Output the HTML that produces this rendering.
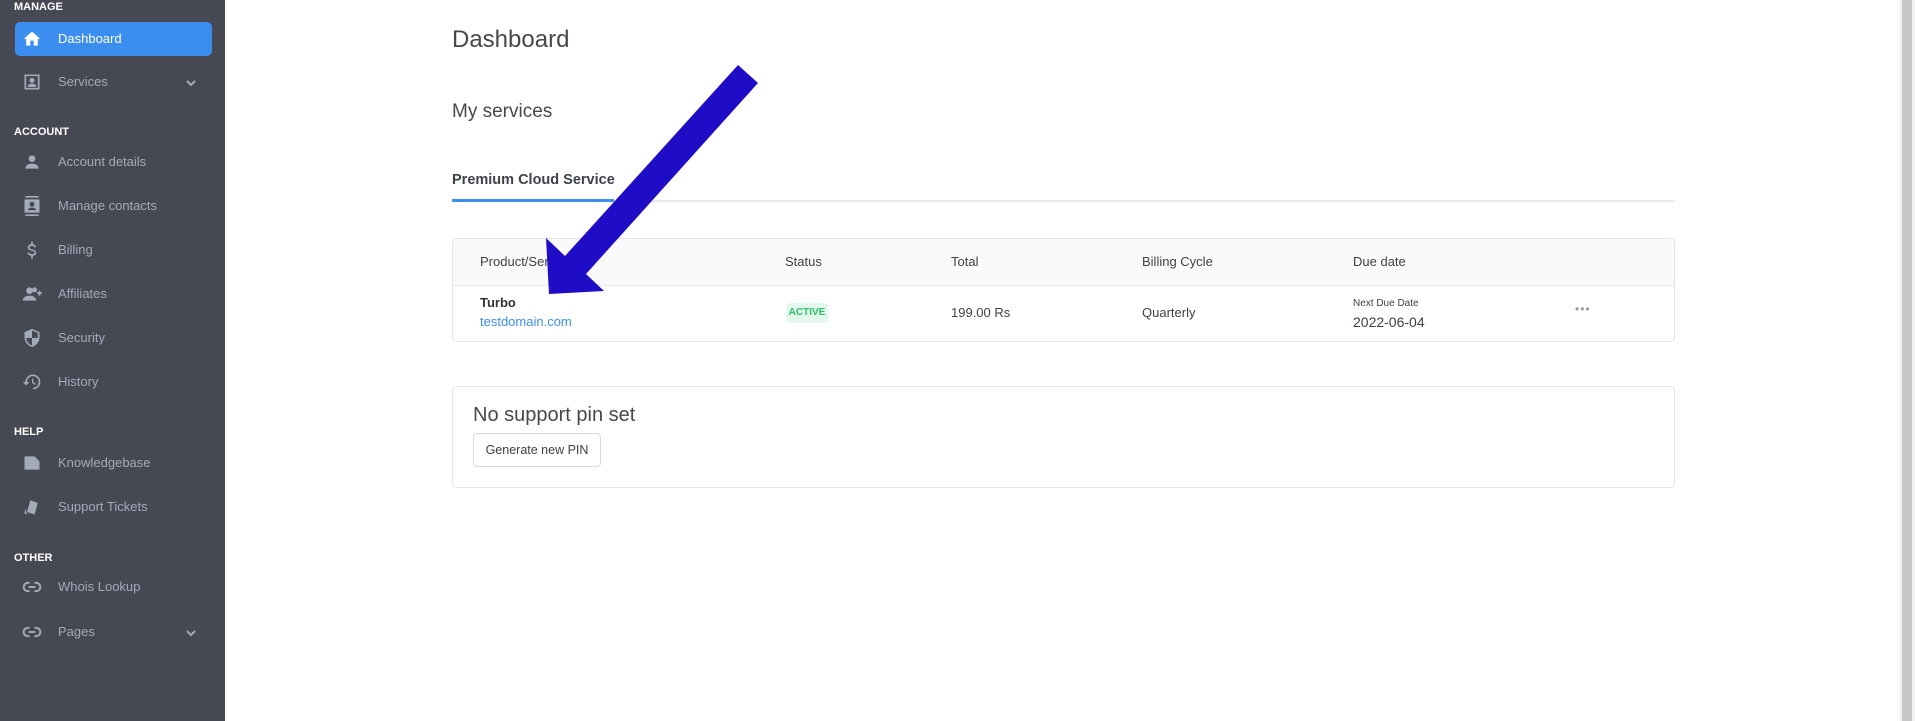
<!DOCTYPE html>
<html><head><meta charset="utf-8">
<style>
*{margin:0;padding:0;box-sizing:border-box}
body{width:1915px;height:721px;overflow:hidden;background:#fff;font-family:"Liberation Sans",sans-serif;position:relative}
.sb{position:absolute;left:0;top:0;width:225px;height:721px;background:#464953}
.lbl{position:absolute;left:14px;color:#fff;font-size:11px;font-weight:bold}
.it{position:absolute;left:15px;width:197px;height:34px;color:#a3aab8;font-size:13px}
.it span{position:absolute;left:43px;top:9px}
.it svg{position:absolute;left:7px;top:7px;width:20px;height:20px;fill:#a3aab8}
.it .chev{left:170px;top:12px;width:12px;height:12px;fill:none;stroke:#a3aab8;stroke-width:2}
.act{background:#3b8ef0;border-radius:5px;color:#fff}
.act svg{fill:#fff}
.t{position:absolute;color:#333}
.sc{position:absolute;left:1900px;top:0;width:15px;height:721px;background:#f1f1f1}
.sc div{position:absolute;left:2px;top:0;width:10px;height:721px;background:#c8c8c8}
</style></head><body>
<div class="sb">
<div class="lbl" style="top:1px">MANAGE</div>
<div class="it act" style="top:22px"><svg viewBox="0 0 24 24"><path d="M10 20v-6h4v6h5v-8h3L12 3 2 12h3v8z"/></svg><span>Dashboard</span></div>
<div class="it" style="top:65px"><svg viewBox="0 0 24 24"><path d="M3 3h18v18H3zM5 5v14h14V5zm7 2a3 3 0 110 6 3 3 0 010-6zm-5 10c0-2 3-3 5-3s5 1 5 3v1H7z"/></svg><span>Services</span><svg class="chev" viewBox="0 0 12 12"><path d="M2 4l4 4 4-4"/></svg></div>
<div class="lbl" style="top:126px">ACCOUNT</div>
<div class="it" style="top:145px"><svg viewBox="0 0 24 24"><circle cx="12" cy="8" r="4"/><path d="M4 20c0-4 4-6 8-6s8 2 8 6z"/></svg><span>Account details</span></div>
<div class="it" style="top:189px"><svg viewBox="0 0 24 24"><path d="M4 0h16v2H4zM4 22h16v2H4zM3 4h18v16H3zm9 3a3 3 0 100 6 3 3 0 000-6zm-5 10h10c0-2-3-3-5-3s-5 1-5 3z"/></svg><span>Manage contacts</span></div>
<div class="it" style="top:233px"><svg viewBox="0 0 24 24"><path d="M11 2h2v3c2 .3 3.5 1.5 4 3.5l-2 .5c-.3-1.3-1.5-2-3-2s-3 .7-3 2c0 1.2 1 1.7 3 2.2 3 .7 5 1.7 5 4.3 0 2-1.6 3.3-4 3.6V22h-2v-3c-2.5-.3-4-1.6-4.4-3.6l2-.5c.3 1.4 1.6 2.2 3.4 2.2 1.8 0 3-.8 3-2 0-1.3-1.2-1.8-3.3-2.3C8.6 12.2 7 11.2 7 8.7 7 6.8 8.6 5.4 11 5z"/></svg><span>Billing</span></div>
<div class="it" style="top:277px"><svg viewBox="0 0 24 24"><circle cx="9" cy="8" r="4"/><path d="M1 20c0-4 4-6 8-6s8 2 8 6z"/><circle cx="15" cy="7" r="3"/><path d="M20 8h2v2h2v2h-2v2h-2v-2h-2v-2h2z"/></svg><span>Affiliates</span></div>
<div class="it" style="top:321px"><svg viewBox="0 0 24 24"><path d="M12 1l9 4v6c0 6-4 10-9 12-5-2-9-6-9-12V5zm0 2v9H5c.5 4.5 3.5 7.5 7 9v-9h7V6z"/></svg><span>Security</span></div>
<div class="it" style="top:365px"><svg viewBox="0 0 24 24"><path d="M13 3a9 9 0 00-9 9H1l4 4 4-4H6a7 7 0 117 7v2a9 9 0 000-18zm-1 5v5l4 2.5.8-1.3-3.3-2V8z"/></svg><span>History</span></div>
<div class="lbl" style="top:426px">HELP</div>
<div class="it" style="top:446px"><svg viewBox="0 0 24 24"><path d="M3 4h12l6 6v10H3z"/></svg><span>Knowledgebase</span></div>
<div class="it" style="top:490px"><svg viewBox="0 0 24 24"><path d="M10 4l9 3-4 14-9-3zM4 14l2 7-3-1z"/></svg><span>Support Tickets</span></div>
<div class="lbl" style="top:552px">OTHER</div>
<div class="it" style="top:570px"><svg viewBox="0 0 24 24" style="fill:none;stroke:#a3aab8;stroke-width:2.4"><path d="M9 7H7a5 5 0 000 10h2M15 7h2a5 5 0 010 10h-2M8 12h8"/></svg><span>Whois Lookup</span></div>
<div class="it" style="top:615px"><svg viewBox="0 0 24 24" style="fill:none;stroke:#a3aab8;stroke-width:2.4"><path d="M9 7H7a5 5 0 000 10h2M15 7h2a5 5 0 010 10h-2M8 12h8"/></svg><span>Pages</span><svg class="chev" viewBox="0 0 12 12" style="stroke:#a3aab8;fill:none"><path d="M2 4l4 4 4-4"/></svg></div>
</div>

<div class="t" style="left:452px;top:26px;font-size:24px;color:#45494f">Dashboard</div>
<div class="t" style="left:452px;top:101px;font-size:19px;color:#45494f">My services</div>
<div class="t" style="left:452px;top:172px;font-size:14.5px;font-weight:bold;color:#3d4148">Premium Cloud Service</div>
<div style="position:absolute;left:452px;top:200px;width:1223px;height:2px;background:#e8e9ec"></div>
<div style="position:absolute;left:452px;top:199px;width:162px;height:3px;background:#3b8ef0"></div>

<div style="position:absolute;left:452px;top:238px;width:1223px;height:104px;border:1px solid #e2e4e8;border-radius:5px;overflow:hidden">
<div style="position:absolute;left:0;top:0;width:100%;height:47px;background:#fafafa;border-bottom:1px solid #e8e9ec"></div>
</div>
<div class="t" style="left:480px;top:254px;font-size:13px;color:#3d4148">Product/Service</div>
<div class="t" style="left:785px;top:254px;font-size:13px;color:#3d4148">Status</div>
<div class="t" style="left:951px;top:254px;font-size:13px;color:#3d4148">Total</div>
<div class="t" style="left:1142px;top:254px;font-size:13px;color:#3d4148">Billing Cycle</div>
<div class="t" style="left:1353px;top:254px;font-size:13px;color:#3d4148">Due date</div>
<div class="t" style="left:480px;top:295px;font-size:13px;font-weight:bold;color:#333">Turbo</div>
<div class="t" style="left:480px;top:314px;font-size:13px;color:#3b8ef0">testdomain.com</div>
<div style="position:absolute;left:786px;top:303px;width:42px;height:20px;background:#e3f8ec;border-radius:4px;color:#2fbf6c;font-size:10px;font-weight:bold;text-align:center;line-height:20px">ACTIVE</div>
<div class="t" style="left:951px;top:305px;font-size:13px;color:#3d4148">199.00 Rs</div>
<div class="t" style="left:1142px;top:305px;font-size:13px;color:#3d4148">Quarterly</div>
<div class="t" style="left:1353px;top:298px;font-size:10px;color:#3d4148">Next Due Date</div>
<div class="t" style="left:1353px;top:314px;font-size:14px;color:#3d4148">2022-06-04</div>
<div class="t" style="left:1575px;top:302px;font-size:12px;color:#999;letter-spacing:1px">•••</div>

<div style="position:absolute;left:452px;top:386px;width:1223px;height:102px;border:1px solid #e2e4e8;border-radius:5px"></div>
<div class="t" style="left:473px;top:404px;font-size:20px;color:#45494f">No support pin set</div>
<div style="position:absolute;left:473px;top:433px;width:128px;height:34px;border:1px solid #d6d9de;border-radius:4px;font-size:12.5px;color:#3d4148;text-align:center;line-height:32px">Generate new PIN</div>

<svg style="position:absolute;left:0;top:0" width="1915" height="721"><polygon points="738,65 758,83 586,274 604,291 549,294 546,238 565,256" fill="#1f0cc6"/></svg>
<div class="sc"><div></div></div>
</body></html>
